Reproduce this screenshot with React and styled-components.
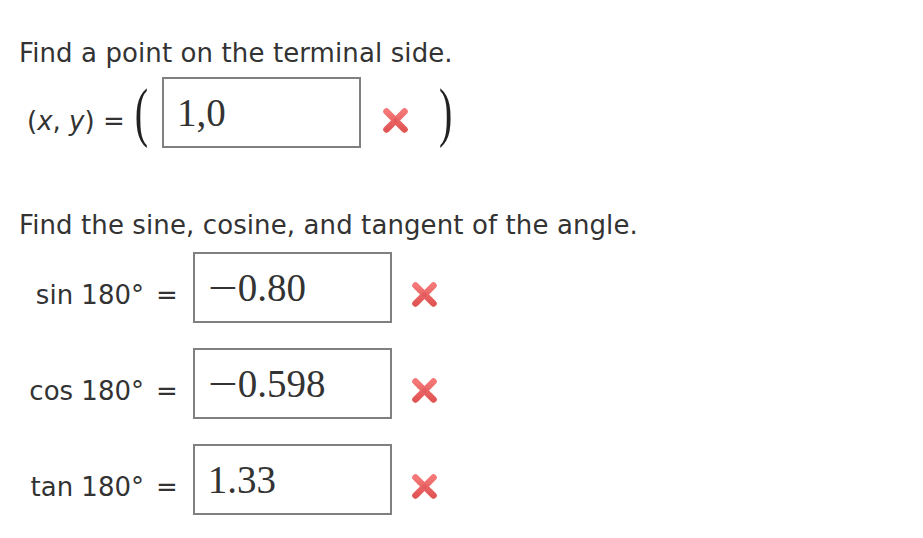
import React from "react";
import styled, { createGlobalStyle } from "styled-components";

const Global = createGlobalStyle`
  html, body { margin: 0; padding: 0; background: #ffffff; }
  body { font-family: "DejaVu Sans", Verdana, sans-serif; color: #333333; }
`;

const Page = styled.div`
  padding: 38px 0 0 19px;
  width: 923px;
  height: 538px;
  box-sizing: border-box;
`;

const Heading = styled.p`
  margin: ${(p) => p.$mt || 0}px 0 0 0;
  font-size: 26px;
  line-height: 30px;
  letter-spacing: 0.1px;
  color: #333333;
`;

const PointRow = styled.div`
  display: flex;
  align-items: center;
  height: 71px;
  margin-top: 9px;
`;

const PointLabel = styled.span`
  font-size: 26px;
  line-height: 30px;
  padding-left: 8px;
  padding-top: 16px;
  white-space: pre;
  color: #333333;
  i { font-style: oblique; }
`;

const Paren = styled.span`
  display: inline-block;
  font-family: "Liberation Serif", "Times New Roman", serif;
  font-size: 40px;
  line-height: 40px;
  color: #222222;
  transform: scaleY(1.62);
  margin-left: ${(p) => p.$ml}px;
  margin-right: ${(p) => p.$mr}px;
`;

const AnswerBox = styled.div`
  box-sizing: border-box;
  width: 199px;
  height: 71px;
  border: 2px solid #808080;
  display: flex;
  align-items: center;
  padding-left: 13px;
  font-family: "Liberation Serif", "Times New Roman", serif;
  font-size: 39px;
  color: #333333;
  background: #ffffff;
  flex-shrink: 0;
`;

const Minus = styled.span`
  display: inline-block;
  transform: scaleX(1.35);
  transform-origin: left center;
  margin-right: 8px;
`;

const Mark = styled.span`
  display: inline-flex;
  margin-left: ${(p) => p.$ml}px;
  padding-top: ${(p) => p.$pt}px;
`;

const TrigList = styled.div`
  display: flex;
  flex-direction: column;
  gap: 25px;
  margin-top: 12px;
`;

const TrigRow = styled.div`
  display: flex;
  align-items: center;
  height: 71px;
`;

const TrigLabel = styled.span`
  width: 125px;
  text-align: right;
  font-size: 26px;
  line-height: 30px;
  padding-top: 14px;
  white-space: pre;
  color: #333333;
`;

const Equals = styled.span`
  font-size: 26px;
  line-height: 30px;
  padding-top: 14px;
  margin-left: 12px;
  margin-right: 15px;
  color: #333333;
`;

function WrongIcon({ id }) {
  return (
    <svg width="27" height="27" viewBox="0 0 27 27">
      <defs>
        <linearGradient id={id} x1="0" y1="0" x2="0" y2="1">
          <stop offset="0" stopColor="#f47878" />
          <stop offset="1" stopColor="#e25555" />
        </linearGradient>
      </defs>
      <g stroke={`url(#${id})`} strokeWidth="6.5" strokeLinecap="round">
        <line x1="4.5" y1="4.5" x2="22.5" y2="22.5" />
        <line x1="22.5" y1="4.5" x2="4.5" y2="22.5" />
      </g>
      <circle cx="13.5" cy="13.5" r="2.5" fill="#d84848" opacity="0.35" />
    </svg>
  );
}

function Value({ text }) {
  if (text.startsWith("−")) {
    return (
      <span>
        <Minus>−</Minus>
        {text.slice(1)}
      </span>
    );
  }
  return <span>{text}</span>;
}

const rows = [
  { label: "sin 180°", value: "−0.80" },
  { label: "cos 180°", value: "−0.598" },
  { label: "tan 180°", value: "1.33" },
];

export default function App() {
  return (
    <>
      <Global />
      <Page>
        <Heading>Find a point on the terminal side.</Heading>
        <PointRow>
          <PointLabel>
            (<i>x</i>, <i>y</i>) =
          </PointLabel>
          <Paren $ml={10} $mr={14}>(</Paren>
          <AnswerBox>
            <Value text="1,0" />
          </AnswerBox>
          <Mark $ml={21} $pt={16}>
            <WrongIcon id="g0" />
          </Mark>
          <Paren $ml={30} $mr={0}>)</Paren>
        </PointRow>
        <Heading $mt={62}>Find the sine, cosine, and tangent of the angle.</Heading>
        <TrigList>
          {rows.map((r, i) => (
            <TrigRow key={r.label}>
              <TrigLabel>{r.label}</TrigLabel>
              <Equals>=</Equals>
              <AnswerBox>
                <Value text={r.value} />
              </AnswerBox>
              <Mark $ml={19} $pt={14}>
                <WrongIcon id={`g${i + 1}`} />
              </Mark>
            </TrigRow>
          ))}
        </TrigList>
      </Page>
    </>
  );
}
